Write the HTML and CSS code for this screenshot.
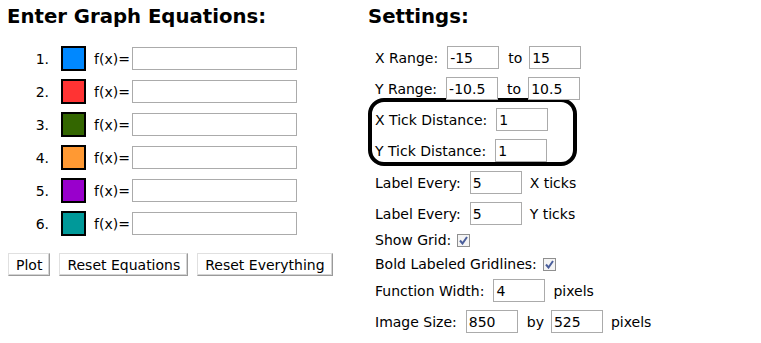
FILE: index.html
```html
<!DOCTYPE html>
<html>
<head lang="en">
    <meta charset="UTF-8">
    <title>Graph</title>
    <link rel="stylesheet" href="styles.css">
</head>
<body>
    <div id="page">
        <div id="equations">
            <h2>Enter Graph Equations:</h2>
            <div class="eq-list">
                <div class="eq"><span class="num">1.</span><span class="swatch blue"></span><span class="fx">f(x)=</span><input type="text" class="eq-input"/></div>
                <div class="eq"><span class="num">2.</span><span class="swatch red"></span><span class="fx">f(x)=</span><input type="text" class="eq-input"/></div>
                <div class="eq"><span class="num">3.</span><span class="swatch green"></span><span class="fx">f(x)=</span><input type="text" class="eq-input"/></div>
                <div class="eq"><span class="num">4.</span><span class="swatch orange"></span><span class="fx">f(x)=</span><input type="text" class="eq-input"/></div>
                <div class="eq"><span class="num">5.</span><span class="swatch purple"></span><span class="fx">f(x)=</span><input type="text" class="eq-input"/></div>
                <div class="eq"><span class="num">6.</span><span class="swatch teal"></span><span class="fx">f(x)=</span><input type="text" class="eq-input"/></div>
            </div>
            <div class="buttons">
                <button>Plot</button>
                <button>Reset Equations</button>
                <button>Reset Everything</button>
            </div>
        </div>
        <div id="settings">
            <h2>Settings:</h2>
            <div class="row first"><span class="label">X Range:</span><input type="text" class="small" value="-15"/><span class="mid">to</span><input type="text" class="small" value="15"/></div>
            <div class="row"><span class="label">Y Range:</span><input type="text" class="small" value="-10.5"/><span class="mid">to</span><input type="text" class="small" value="10.5"/></div>
            <div class="ticks">
                <div class="row"><span class="label">X Tick Distance:</span><input type="text" class="small" value="1"/></div>
                <div class="row"><span class="label">Y Tick Distance:</span><input type="text" class="small" value="1"/></div>
            </div>
            <div class="row"><span class="label">Label Every:</span><input type="text" class="small" value="5"/><span class="after">X ticks</span></div>
            <div class="row"><span class="label">Label Every:</span><input type="text" class="small" value="5"/><span class="after">Y ticks</span></div>
            <div class="row check-row"><span class="label">Show Grid:</span><span class="check"><svg width="9" height="9" viewBox="0 0 9 9"><path d="M1 4.5 L3.5 7.5 L8 1" fill="none" stroke="#4a5e9b" stroke-width="2"/></svg></span></div>
            <div class="row check-row"><span class="label">Bold Labeled Gridlines:</span><span class="check"><svg width="9" height="9" viewBox="0 0 9 9"><path d="M1 4.5 L3.5 7.5 L8 1" fill="none" stroke="#4a5e9b" stroke-width="2"/></svg></span></div>
            <div class="row"><span class="label">Function Width:</span><input type="text" class="small" value="4"/><span class="after">pixels</span></div>
            <div class="row"><span class="label">Image Size:</span><input type="text" class="small" value="850"/><span class="mid">by</span><input type="text" class="small" value="525"/><span class="after">pixels</span></div>
        </div>
    </div>
</body>
</html>
```

FILE: styles.css
```css
*{
    margin: 0;
    padding: 0;
}
body{
    font-family: "DejaVu Sans", Verdana, sans-serif;
    font-size: 14px;
    color: #000000;
    background: #FFFFFF;
}
#page{
    display: flex;
    padding-top: 5px;
}
h2{
    font-size: 19.7px;
    line-height: 24px;
    font-weight: bold;
}
input{
    font-family: "DejaVu Sans", Verdana, sans-serif;
    font-size: 14px;
    border: 1px solid #ababab;
    height: 23px;
    padding: 0 2px;
    box-sizing: border-box;
    color: #000000;
}
#equations{
    width: 361px;
    padding-left: 7px;
}
.eq-list{
    margin-top: 17px;
}
.eq{
    display: flex;
    align-items: center;
    height: 25px;
    margin-bottom: 8px;
}
.num{
    width: 42px;
    text-align: right;
}
.swatch{
    width: 25px;
    height: 25px;
    border: 2px solid #000000;
    box-sizing: border-box;
    margin-left: 12px;
    margin-right: 8px;
}
.blue{ background: #0088ff; }
.red{ background: #ff3333; }
.green{ background: #336600; }
.orange{ background: #ff9933; }
.purple{ background: #9900cc; }
.teal{ background: #009999; }
.fx{
    width: 38px;
}
.eq-input{
    width: 165px;
    height: 23px;
}
.buttons{
    display: flex;
    gap: 9px;
    margin-top: 17px;
    margin-left: 1px;
}
button{
    font-family: "DejaVu Sans", Verdana, sans-serif;
    font-size: 14px;
    height: 23px;
    padding: 0 7px;
    background: #FFFFFF;
    border: 1px solid;
    border-color: #e0e0e0 #9a9a9a #9a9a9a #e0e0e0;
    box-shadow: inset -1px -1px 0 #d4d4d4;
    color: #000000;
}
#settings{
    flex: 1;
}
.row{
    display: flex;
    align-items: center;
    height: 23px;
    margin-top: 8px;
    padding-left: 7px;
}
.row.first{
    margin-top: 17px;
}
.label{
    margin-right: 9px;
}
.check-row .label{
    margin-right: 6px;
}
.small{
    width: 52px;
}
.mid{
    margin: 0 7px 0 9px;
}
.after{
    margin-left: 8px;
}
.ticks{
    width: 209px;
    height: 68px;
    box-sizing: border-box;
    border: 4px solid #000000;
    border-radius: 16px;
    margin-top: -2px;
    margin-bottom: -3px;
}
.ticks .row{
    padding-left: 3px;
    margin-top: 6px;
}
.ticks .row + .row{
    margin-top: 8px;
}
.check-row{
    height: 18px;
    margin-top: 6px;
}
.check-row + .row{
    margin-top: 6px;
}
.check{
    width: 13px;
    height: 13px;
    box-sizing: border-box;
    border: 1px solid #8f8f8f;
    background: #f4f4f4;
    display: flex;
    align-items: center;
    justify-content: center;
}
```
